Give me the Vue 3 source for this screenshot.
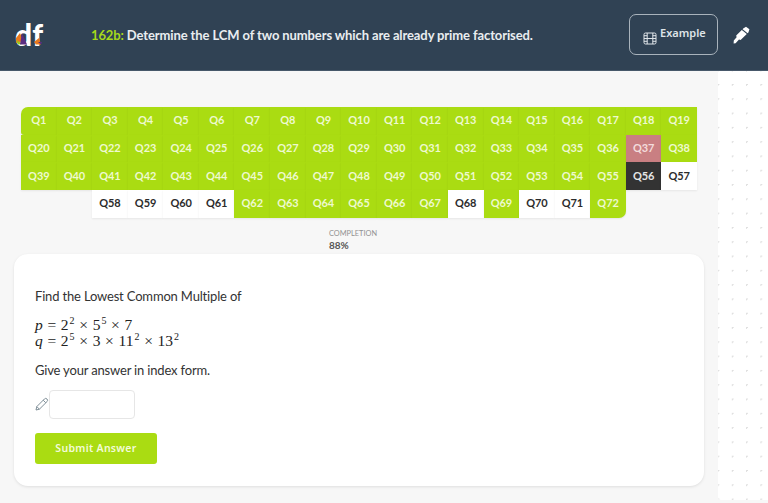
<template>
  <div class="page">
    <header class="topbar">
      <div class="logo">
        <span class="logo-text">df</span>
        <svg class="logo-art" width="28" height="24" viewBox="0 0 28 24">
          <path d="M1 16 L5 11 L8 19 L1 21 Z" fill="#e8791e" />
          <path d="M1 18 L3 22.5 L8 22 Z" fill="#9ac51a" />
          <path d="M7 11 L12 22.5 L5 22.5 Z" fill="#5a2d82" />
          <path d="M19 20 L24 16 L26 22.5 L21 22.5 Z" fill="#e8791e" />
          <path d="M23 20 L27 20 L26 22.5 Z" fill="#5a2d82" />
        </svg>
      </div>
      <h1 class="title"><span class="title-num">162b:</span> Determine the LCM of two numbers which are already prime factorised.</h1>
      <button class="example-btn">
        <svg class="film" width="14" height="13" viewBox="0 0 14 13" fill="none" stroke="#dfe4e8" stroke-width="1">
          <rect x="1" y="1" width="12" height="11" rx="1.5" />
          <path d="M4.2 1v11M9.8 1v11M1 6.5h12M1 3.7h3.2M9.8 3.7h3.2M1 9.3h3.2M9.8 9.3h3.2" />
        </svg>
        <span>Example</span>
      </button>
      <svg class="marker" width="17" height="18" viewBox="0 0 17 18">
        <path d="M10.2 2.6 L13 0.8 L16.4 3.2 L15.4 6.4 L14.6 7.2 L9.6 3.2 Z" fill="#fff" />
        <path d="M8.8 4 L13.8 8 L7.6 14 L6 13.6 L2.6 17.2 L0.6 17.4 L0.8 14.6 L3.6 11.2 L3.2 9.6 Z" fill="#fff" />
      </svg>
    </header>

    <div class="body-row">
      <main class="content">
        <div class="grid">
          <div
            v-for="q in questions"
            :key="q.n"
            class="cell"
            :class="[q.state, { first: q.n === 1, last: q.n === 72 }]"
          >Q{{ q.n }}</div>
        </div>

        <div class="completion">
          <div class="completion-label">COMPLETION</div>
          <div class="completion-value">88%</div>
        </div>

        <section class="card">
          <p class="prompt">Find the Lowest Common Multiple of</p>
          <div class="math">
            <div><i>p</i> = 2<sup>2</sup> × 5<sup>5</sup> × 7</div>
            <div><i>q</i> = 2<sup>5</sup> × 3 × 11<sup>2</sup> × 13<sup>2</sup></div>
          </div>
          <p class="prompt give">Give your answer in index form.</p>
          <div class="answer">
            <svg width="14" height="14" viewBox="0 0 14 14" fill="none" stroke="#7f8f98" stroke-width="1">
              <path d="M1 13 L1.8 9.6 L9.4 2 a1.6 1.6 0 0 1 2.6 2.6 L4.4 12.2 Z" />
              <path d="M8.2 3.2 L10.8 5.8 M1.8 9.6 L4.4 12.2" />
            </svg>
            <input class="answer-input" type="text" />
          </div>
          <button class="submit">Submit Answer</button>
        </section>
      </main>
      <aside class="dots"></aside>
    </div>
  </div>
</template>

<script setup>
const pending = [58, 59, 60, 61, 68, 70, 71, 57]

const questions = Array.from({ length: 72 }, (_, i) => {
  const n = i + 1
  let state = 'done'
  if (pending.includes(n)) state = 'todo'
  if (n === 37) state = 'wrong'
  if (n === 56) state = 'current'
  return { n, state }
})
</script>

<style>
html,
body {
  margin: 0;
  background: #f7f7f7;
  overflow: hidden;
}
</style>

<style scoped>
.page {
  width: 768px;
  height: 503px;
  overflow: hidden;
  font-family: Lato, "Liberation Sans", sans-serif;
  color: #3a3a3a;
}

.topbar {
  height: 71px;
  box-sizing: border-box;
  background: #304254;
  border-bottom: 1px solid #47586a;
  display: flex;
  align-items: center;
  position: relative;
}

.logo {
  width: 28px;
  height: 24px;
  margin: -2px 0 0 15px;
  position: relative;
}

.logo-text {
  font-weight: 900;
  font-size: 30px;
  line-height: 24px;
  color: #fff;
}

.logo-art {
  position: absolute;
  left: 0;
  top: 0;
}

.title {
  margin: 0 0 0 48px;
  font-size: 13px;
  letter-spacing: -0.11px;
  font-weight: 700;
  color: #e9edf0;
  flex: 1;
}

.title-num {
  color: #a6d91a;
}

.example-btn {
  width: 89px;
  height: 41px;
  box-sizing: border-box;
  margin: -1px 0 0 1px;
  background: transparent;
  border: 1px solid #a9b3bc;
  border-radius: 7px;
  color: #dfe4e8;
  font-family: "Noto Sans", sans-serif;
  font-size: 11px;
  font-weight: 600;
  display: flex;
  align-items: flex-start;
  padding: 10px 0 0 13px;
  gap: 3px;
}

.film {
  margin-top: 7px;
}

.marker {
  margin: 0 18px 0 15px;
}

.body-row {
  display: flex;
  height: 432px;
}

.content {
  width: 718px;
  flex: none;
  box-sizing: border-box;
  padding: 36px 14px 0;
}

.dots {
  flex: 1;
  height: 429px;
  background-color: #fff;
  background-image: radial-gradient(circle at 0.5px 0.5px, #dedede 1px, transparent 1.2px);
  background-size: 14.3px 14.3px;
  background-position: -0.5px 13px;
  border-bottom-left-radius: 3px;
}

.grid {
  width: 676px;
  margin-left: 7px;
  display: flex;
  flex-wrap: wrap;
  justify-content: center;
}

.cell {
  width: 35.58px;
  height: 27.7px;
  box-sizing: border-box;
  padding-bottom: 2px;
  display: flex;
  align-items: center;
  justify-content: center;
  font-size: 11px;
  letter-spacing: -0.1px;
  font-weight: 700;
  box-shadow: 0 1px 2px rgba(0, 0, 0, 0.07);
}

.done {
  background: #aadc12;
  color: #eef9cf;
}

.todo {
  background: #fff;
  color: #2c2c2c;
}

.wrong {
  background: #c97f82;
  color: #f3dcdc;
}

.current {
  background: #333;
  color: #e6e6e6;
}

.first {
  border-top-left-radius: 7px;
  border-bottom-left-radius: 3px;
}

.last {
  border-bottom-right-radius: 7px;
}

.completion {
  padding-left: 315px;
  height: 36px;
  box-sizing: border-box;
  padding-top: 11px;
}

.completion-label {
  font-size: 7.4px;
  line-height: 10px;
  color: #929292;
}

.completion-value {
  font-size: 10px;
  line-height: 13px;
  font-weight: 700;
  color: #555;
}

.card {
  width: 690px;
  height: 232px;
  box-sizing: border-box;
  background: #fff;
  border-radius: 14px;
  box-shadow: 0 1px 3px rgba(0, 0, 0, 0.1);
  padding: 33px 21px 0;
}

.prompt {
  margin: 0;
  font-size: 13px;
  letter-spacing: -0.17px;
  line-height: 18px;
  color: #333;
}

.math {
  margin-top: 12px;
  font-family: "Liberation Serif", serif;
  font-size: 15.5px;
  word-spacing: 0.8px;
  line-height: 16px;
  color: #222;
}

.math sup {
  font-size: 10px;
  line-height: 0;
  margin-left: 1px;
}

.give {
  margin-top: 12px;
}

.answer {
  display: flex;
  align-items: center;
  margin-top: 11px;
}

.answer svg {
  flex: none;
}

.answer-input {
  width: 86px;
  height: 29px;
  box-sizing: border-box;
  border: 1px solid #e6e6e6;
  border-radius: 4px;
  background: #fff;
  outline: none;
}

.submit {
  display: block;
  width: 122px;
  height: 31px;
  margin-top: 14px;
  border: none;
  border-radius: 3px;
  background: #aadc12;
  color: #f2fbd8;
  font-family: "Noto Sans", sans-serif;
  font-size: 10.5px;
  font-weight: 600;
  letter-spacing: 0.3px;
}
</style>
